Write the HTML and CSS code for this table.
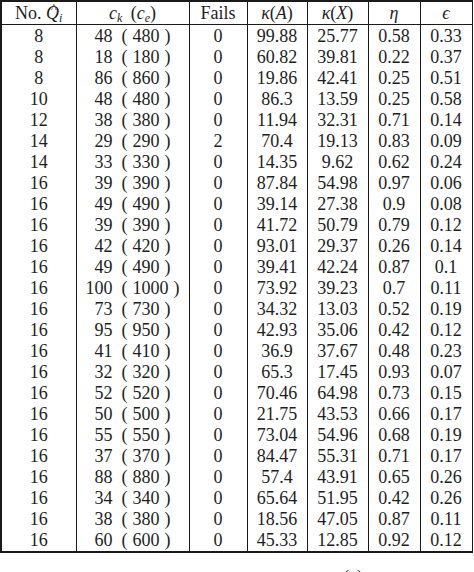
FILE: index.html
```html
<!DOCTYPE html>
<html>
<head>
<meta charset="utf-8">
<link rel="stylesheet" href="styles.css">
</head>
<body>
<table class="results">
  <colgroup>
    <col class="c1"><col class="c2"><col class="c3"><col class="c4"><col class="c5"><col class="c6"><col class="c7">
  </colgroup>
  <thead>
    <tr>
      <th>No. <span class="m hat">Q</span><sub class="m">i</sub></th>
      <th><span class="m">c</span><sub class="m">k</sub> <span class="gap">(</span><span class="m">c</span><sub class="m">e</sub>)</th>
      <th>Fails</th>
      <th><span class="m">κ</span>(<span class="m">A</span>)</th>
      <th><span class="m">κ</span>(<span class="m">X</span>)</th>
      <th><span class="m">η</span></th>
      <th><span class="m">ϵ</span></th>
    </tr>
  </thead>
  <tbody>
    <tr><td>8</td><td>48<span class="po">(</span>480<span class="pc">)</span></td><td>0</td><td>99.88</td><td>25.77</td><td>0.58</td><td>0.33</td></tr>
    <tr><td>8</td><td>18<span class="po">(</span>180<span class="pc">)</span></td><td>0</td><td>60.82</td><td>39.81</td><td>0.22</td><td>0.37</td></tr>
    <tr><td>8</td><td>86<span class="po">(</span>860<span class="pc">)</span></td><td>0</td><td>19.86</td><td>42.41</td><td>0.25</td><td>0.51</td></tr>
    <tr><td>10</td><td>48<span class="po">(</span>480<span class="pc">)</span></td><td>0</td><td>86.3</td><td>13.59</td><td>0.25</td><td>0.58</td></tr>
    <tr><td>12</td><td>38<span class="po">(</span>380<span class="pc">)</span></td><td>0</td><td>11.94</td><td>32.31</td><td>0.71</td><td>0.14</td></tr>
    <tr><td>14</td><td>29<span class="po">(</span>290<span class="pc">)</span></td><td>2</td><td>70.4</td><td>19.13</td><td>0.83</td><td>0.09</td></tr>
    <tr><td>14</td><td>33<span class="po">(</span>330<span class="pc">)</span></td><td>0</td><td>14.35</td><td>9.62</td><td>0.62</td><td>0.24</td></tr>
    <tr><td>16</td><td>39<span class="po">(</span>390<span class="pc">)</span></td><td>0</td><td>87.84</td><td>54.98</td><td>0.97</td><td>0.06</td></tr>
    <tr><td>16</td><td>49<span class="po">(</span>490<span class="pc">)</span></td><td>0</td><td>39.14</td><td>27.38</td><td>0.9</td><td>0.08</td></tr>
    <tr><td>16</td><td>39<span class="po">(</span>390<span class="pc">)</span></td><td>0</td><td>41.72</td><td>50.79</td><td>0.79</td><td>0.12</td></tr>
    <tr><td>16</td><td>42<span class="po">(</span>420<span class="pc">)</span></td><td>0</td><td>93.01</td><td>29.37</td><td>0.26</td><td>0.14</td></tr>
    <tr><td>16</td><td>49<span class="po">(</span>490<span class="pc">)</span></td><td>0</td><td>39.41</td><td>42.24</td><td>0.87</td><td>0.1</td></tr>
    <tr><td>16</td><td>100<span class="po">(</span>1000<span class="pc">)</span></td><td>0</td><td>73.92</td><td>39.23</td><td>0.7</td><td>0.11</td></tr>
    <tr><td>16</td><td>73<span class="po">(</span>730<span class="pc">)</span></td><td>0</td><td>34.32</td><td>13.03</td><td>0.52</td><td>0.19</td></tr>
    <tr><td>16</td><td>95<span class="po">(</span>950<span class="pc">)</span></td><td>0</td><td>42.93</td><td>35.06</td><td>0.42</td><td>0.12</td></tr>
    <tr><td>16</td><td>41<span class="po">(</span>410<span class="pc">)</span></td><td>0</td><td>36.9</td><td>37.67</td><td>0.48</td><td>0.23</td></tr>
    <tr><td>16</td><td>32<span class="po">(</span>320<span class="pc">)</span></td><td>0</td><td>65.3</td><td>17.45</td><td>0.93</td><td>0.07</td></tr>
    <tr><td>16</td><td>52<span class="po">(</span>520<span class="pc">)</span></td><td>0</td><td>70.46</td><td>64.98</td><td>0.73</td><td>0.15</td></tr>
    <tr><td>16</td><td>50<span class="po">(</span>500<span class="pc">)</span></td><td>0</td><td>21.75</td><td>43.53</td><td>0.66</td><td>0.17</td></tr>
    <tr><td>16</td><td>55<span class="po">(</span>550<span class="pc">)</span></td><td>0</td><td>73.04</td><td>54.96</td><td>0.68</td><td>0.19</td></tr>
    <tr><td>16</td><td>37<span class="po">(</span>370<span class="pc">)</span></td><td>0</td><td>84.47</td><td>55.31</td><td>0.71</td><td>0.17</td></tr>
    <tr><td>16</td><td>88<span class="po">(</span>880<span class="pc">)</span></td><td>0</td><td>57.4</td><td>43.91</td><td>0.65</td><td>0.26</td></tr>
    <tr><td>16</td><td>34<span class="po">(</span>340<span class="pc">)</span></td><td>0</td><td>65.64</td><td>51.95</td><td>0.42</td><td>0.26</td></tr>
    <tr><td>16</td><td>38<span class="po">(</span>380<span class="pc">)</span></td><td>0</td><td>18.56</td><td>47.05</td><td>0.87</td><td>0.11</td></tr>
    <tr><td>16</td><td>60<span class="po">(</span>600<span class="pc">)</span></td><td>0</td><td>45.33</td><td>12.85</td><td>0.92</td><td>0.12</td></tr>
  </tbody>
</table>
<p class="caption">(a)</p>
</body>
</html>
```
FILE: styles.css
```css
html, body {
  margin: 0;
  padding: 0;
  background: #ffffff;
}

body {
  font-family: "Liberation Serif", "Times New Roman", serif;
  color: #1e1e1e;
  width: 474px;
  height: 572px;
  overflow: hidden;
}

.results {
  border-collapse: collapse;
  table-layout: fixed;
  width: 472px;
  font-size: 18px;
  border-top: 2px solid #1a1a1a;
  border-bottom: 2px solid #1a1a1a;
  border-left: 2px solid #1a1a1a;
  border-right: 1px solid #1a1a1a;
}

.c1 { width: 75px; }
.c2 { width: 113px; }
.c3 { width: 58px; }
.c4 { width: 60px; }
.c5 { width: 61px; }
.c6 { width: 52px; }
.c7 { width: 52px; }

.results th,
.results td {
  padding: 0;
  text-align: center;
  border-left: 1px solid #1a1a1a;
  border-right: 1px solid #1a1a1a;
  white-space: nowrap;
  line-height: 20px;
}

.results th {
  font-weight: normal;
  height: 22px;
  border-bottom: 1px solid #1a1a1a;
}

.results tbody td {
  height: 21.04px;
}

.po {
  margin-left: 9px;
  margin-right: 5px;
}

.pc {
  margin-left: 5px;
}

.gap {
  margin-left: 4px;
}

.m {
  font-style: italic;
}

.results sub {
  font-size: 12px;
  vertical-align: -3px;
  line-height: 0;
}

.hat {
  position: relative;
}

.hat::before {
  content: "^";
  position: absolute;
  left: 5px;
  top: -5px;
  font-style: normal;
  font-size: 12px;
}

.caption {
  margin: 15px 0 0 0;
  padding-left: 343px;
  font-size: 18px;
  line-height: 18px;
}
```
